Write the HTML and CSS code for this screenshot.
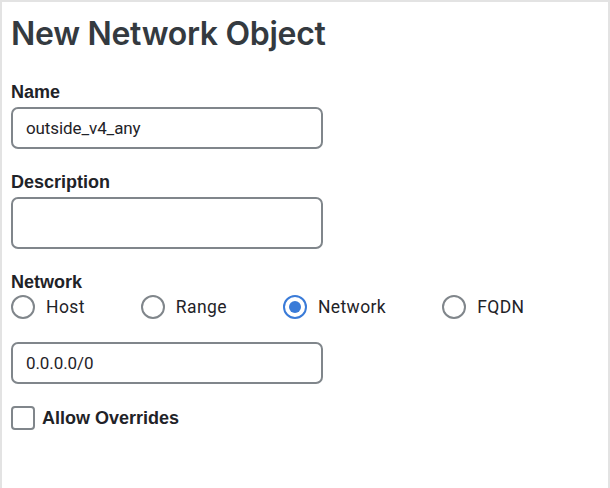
FILE: index.html
```html
<!DOCTYPE html>
<html>
<head>
<meta charset="utf-8">
<link rel="stylesheet" href="styles.css">
</head>
<body>
<div class="frame">
  <h1 class="title">New Network Object</h1>
  <div class="group">
    <label class="label">Name</label>
    <div class="input">outside_v4_any</div>
  </div>
  <div class="group">
    <label class="label">Description</label>
    <div class="input textarea"></div>
  </div>
  <div class="group">
    <label class="label">Network</label>
    <div class="radios">
      <div class="radio-item"><span class="radio"></span><span class="radio-text">Host</span></div>
      <div class="radio-item"><span class="radio"></span><span class="radio-text">Range</span></div>
      <div class="radio-item"><span class="radio checked"></span><span class="radio-text">Network</span></div>
      <div class="radio-item"><span class="radio"></span><span class="radio-text">FQDN</span></div>
    </div>
    <div class="input ip">0.0.0.0/0</div>
  </div>
  <div class="check-row">
    <span class="checkbox"></span><span class="check-text">Allow Overrides</span>
  </div>
</div>
</body>
</html>
```

FILE: styles.css
```css
html, body {
  margin: 0;
  padding: 0;
  background: #ffffff;
}
.frame {
  box-sizing: border-box;
  width: 610px;
  height: 488px;
  border-top: 2px solid #e3e3e3;
  border-left: 2px solid #e3e3e3;
  border-right: 2px solid #e3e3e3;
  padding: 13px 0 0 9px;
  font-family: Roboto, "Liberation Sans", sans-serif;
  color: #1f2328;
}
.title {
  margin: 0;
  font-family: Inter, "Open Sans", sans-serif;
  font-weight: 600;
  font-size: 32px;
  line-height: 38px;
  color: #343a40;
  letter-spacing: -0.3px;
}
.group {
  margin-top: 23px;
}
.group:first-of-type {
  margin-top: 29px;
}
.label {
  display: block;
  font-family: "Liberation Sans", Arial, sans-serif;
  font-weight: 700;
  font-size: 18px;
  line-height: 20px;
  margin-bottom: 5px;
  color: #1f2328;
}
.input {
  box-sizing: border-box;
  width: 312px;
  height: 42px;
  border: 2px solid #80868b;
  border-radius: 7px;
  padding: 0 13px;
  font-size: 17px;
  letter-spacing: -0.1px;
  line-height: 38px;
  color: #1f2328;
}
.textarea {
  height: 52px;
}
.radios {
  display: flex;
  align-items: center;
  margin-top: -2px;
  height: 24px;
}
.radio-item {
  display: flex;
  align-items: center;
  gap: 11px;
  margin-right: 56px;
}
.radio {
  box-sizing: border-box;
  width: 24px;
  height: 24px;
  border: 2px solid #80868b;
  border-radius: 50%;
  display: flex;
  align-items: center;
  justify-content: center;
}
.radio.checked {
  border-color: #3a7bd8;
}
.radio.checked::after {
  content: "";
  width: 12px;
  height: 12px;
  border-radius: 50%;
  background: #3a7bd8;
}
.radio-text {
  font-size: 17.5px;
  letter-spacing: 0.4px;
  line-height: 20px;
}
.ip {
  margin-top: 23px;
}
.check-row {
  display: flex;
  align-items: center;
  gap: 7px;
  margin-top: 22px;
}
.checkbox {
  box-sizing: border-box;
  width: 24px;
  height: 24px;
  border: 2px solid #80868b;
  border-radius: 4px;
}
.check-text {
  font-family: "Liberation Sans", Arial, sans-serif;
  font-weight: 700;
  font-size: 18px;
  line-height: 20px;
}
```
